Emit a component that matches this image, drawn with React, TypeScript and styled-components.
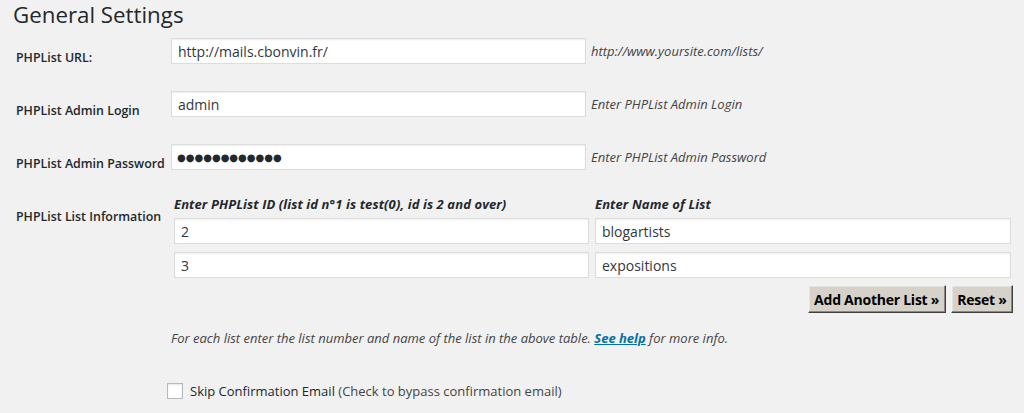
import React from "react";
import styled, { createGlobalStyle } from "styled-components";

const Global = createGlobalStyle`
  html, body { margin: 0; padding: 0; background: #f1f1f1; }
  body { font-family: "Open Sans", "Noto Sans", sans-serif; color: #23282d; font-size: 13px; }
  * { box-sizing: border-box; }
`;

const Page = styled.div`
  padding: 0 11px 0 16px;
  width: 1024px;
  height: 413px;
  overflow: hidden;
`;

const Title = styled.h2`
  margin: 0 0 4px -3px;
  font-size: 22.3px;
  font-weight: 400;
  line-height: 29px;
  color: #23282d;
  white-space: nowrap;
`;

const Row = styled.div<{ $h?: number }>`
  display: grid;
  grid-template-columns: 155px auto;
  align-items: start;
  height: ${(p) => p.$h ?? 53}px;
`;

const Label = styled.div`
  padding-top: 16px;
  font-weight: 600;
  font-size: 12.4px;
  line-height: 18px;
  color: #23282d;
  white-space: nowrap;
`;

const Field = styled.div`
  display: flex;
  align-items: center;
  gap: 5px;
  margin-top: 5px;
`;

const TextInput = styled.input<{ $w?: number }>`
  width: ${(p) => p.$w ?? 415}px;
  height: 26px;
  padding: 0 6px;
  border: 1px solid #ddd;
  box-shadow: inset 0 1px 2px rgba(0, 0, 0, 0.07);
  background: #fff;
  font-family: "Open Sans", "Noto Sans", sans-serif;
  font-size: 14px;
  color: #32373c;
  outline: none;
`;

const Dots = styled(TextInput)`
  font-family: "DejaVu Sans", sans-serif;
  font-size: 10px;
  color: #23282d;
  padding-left: 5px;
`;

const Hint = styled.span`
  font-style: italic;
  font-size: 13px;
  color: #444;
  line-height: 26px;
  white-space: nowrap;
`;

const ListBlock = styled.div`
  margin-left: 3px;
  width: 839px;
  padding-top: 3px;
`;

const ListGrid = styled.div`
  display: grid;
  grid-template-columns: 415px 416px;
  column-gap: 6px;
  row-gap: 8px;
`;

const ColHead = styled.div`
  font-weight: 700;
  font-style: italic;
  font-size: 13px;
  line-height: 18px;
  letter-spacing: 0.1px;
  margin-bottom: -3px;
  white-space: nowrap;
`;

const ButtonBar = styled.div`
  display: flex;
  justify-content: flex-end;
  gap: 5px;
  margin-top: 7px;
`;

const ClassicButton = styled.button`
  height: 28px;
  padding: 0 5.5px;
  background: #d6d2ca;
  border: 1px solid;
  border-color: #f4f2ee #404040 #404040 #f4f2ee;
  box-shadow: inset -1px -1px 0 #8a8782, inset 1px 1px 0 #e6e3dd;
  font-family: "Open Sans", "Noto Sans", sans-serif;
  font-weight: 700;
  font-size: 14px;
  letter-spacing: -0.25px;
  color: #000;
  cursor: pointer;
`;

const Help = styled.p`
  margin: 16px 0 0 155px;
  font-style: italic;
  font-size: 13px;
  line-height: 18px;
  color: #444;
  white-space: nowrap;
`;

const HelpLink = styled.a`
  color: #0073aa;
  font-weight: 700;
  text-decoration: underline;
`;

const CheckRow = styled.label`
  display: flex;
  align-items: center;
  gap: 7px;
  margin: 35px 0 0 151px;
  font-size: 13px;
  color: #23282d;
`;

const Box = styled.input`
  appearance: none;
  margin: 0;
  width: 16px;
  height: 16px;
  background: #fff;
  border: 1px solid #b4b9be;
  box-shadow: inset 0 1px 2px rgba(0, 0, 0, 0.1);
`;

const Note = styled.span`
  color: #444;
`;

export default function App() {
  return (
    <>
      <Global />
      <Page>
        <Title>General Settings</Title>
        <Row>
          <Label>PHPList URL:</Label>
          <Field>
            <TextInput defaultValue="http://mails.cbonvin.fr/" />
            <Hint>http://www.yoursite.com/lists/</Hint>
          </Field>
        </Row>
        <Row>
          <Label>PHPList Admin Login</Label>
          <Field>
            <TextInput defaultValue="admin" />
            <Hint>Enter PHPList Admin Login</Hint>
          </Field>
        </Row>
        <Row>
          <Label>PHPList Admin Password</Label>
          <Field>
            <Dots readOnly value="●●●●●●●●●●●●" aria-label="password" />
            <Hint>Enter PHPList Admin Password</Hint>
          </Field>
        </Row>
        <Row $h={121}>
          <Label>PHPList List Information</Label>
          <ListBlock>
            <ListGrid>
              <ColHead>Enter PHPList ID (list id n°1 is test(0), id is 2 and over)</ColHead>
              <ColHead>Enter Name of List</ColHead>
              <TextInput defaultValue="2" />
              <TextInput $w={416} defaultValue="blogartists" />
              <TextInput defaultValue="3" />
              <TextInput $w={416} defaultValue="expositions" />
            </ListGrid>
            <ButtonBar>
              <ClassicButton>Add Another List »</ClassicButton>
              <ClassicButton>Reset »</ClassicButton>
            </ButtonBar>
          </ListBlock>
        </Row>
        <Help>
          For each list enter the list number and name of the list in the above table.{" "}
          <HelpLink href="#">See help</HelpLink> for more info.
        </Help>
        <CheckRow>
          <Box type="checkbox" />
          <span>
            Skip Confirmation Email <Note>(Check to bypass confirmation email)</Note>
          </span>
        </CheckRow>
      </Page>
    </>
  );
}
